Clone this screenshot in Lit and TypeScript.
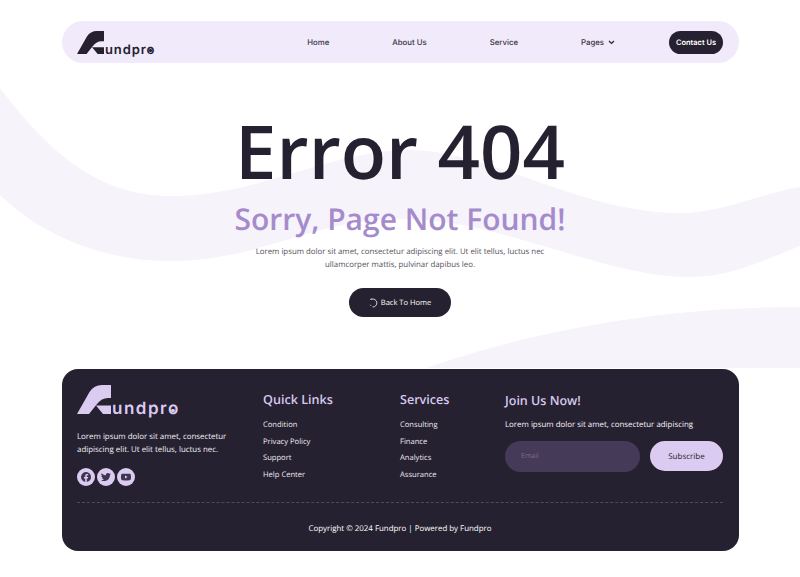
import { LitElement, html, css, svg } from "lit";
import { customElement } from "lit/decorators.js";

const logoMark = svg`<path d="M0 29 L12.5 7 Q17 0 25 0 L34 0 L34 13 L31 13 Q24.5 13 20 19 L12 29 Z"/><path d="M19 20.5 L34 20.5 L34 29 L26 29 Z"/>`;

@customElement("app-root")
export class AppRoot extends LitElement {
  static styles = css`
    :host {
      display: block;
      position: relative;
      height: 577px;
      overflow: hidden;
      background: #fff;
      font-family: "Open Sans", sans-serif;
      color: #262130;
      text-rendering: geometricPrecision;
    }
    .waves { position: absolute; left: 0; top: 0; width: 800px; height: 577px; }
    .waves path { fill: #f6f3fb; }
    .page { position: relative; display: flex; flex-direction: column; padding: 21px 61px 0 62px; }
    header {
      height: 42px;
      background: #f0eafa;
      border-radius: 21px;
      display: flex;
      align-items: center;
      justify-content: space-between;
      padding: 0 16px 0 15px;
    }
    .logo { display: flex; align-items: flex-end; }
    .logo svg { display: block; fill: currentColor; }
    .logo span {
      font-family: Inter, sans-serif;
      font-weight: 600;
      line-height: 1;
      display: block;
    }
    .logo i { font-style: normal; position: relative; }
    .logo i::after {
      content: "";
      position: absolute;
      left: 50%;
      top: 58%;
      width: 0.2em;
      height: 0.2em;
      margin-left: -0.14em;
      margin-top: -0.1em;
      border-radius: 50%;
      background: currentColor;
    }
    .head-logo svg { width: 27px; height: 23px; }
    .head-logo span { font-size: 13px; letter-spacing: 0.9px; margin: 0 0 -3px 1px; }
    nav { display: flex; align-items: center; }
    nav a {
      font-family: Inter, sans-serif;
      font-weight: 500;
      font-size: 7.8px;
      color: #3a3542;
      margin-right: 63px;
      display: flex;
      align-items: center;
      gap: 4px;
    }
    nav a.pages { margin-right: 54px; }
    nav svg { width: 7px; height: 5px; fill: none; stroke: #262130; stroke-width: 1.2; }
    .contact {
      width: 54px; height: 23px; border-radius: 12px;
      background: #262130; color: #fff;
      font-family: Inter, sans-serif; font-weight: 600; font-size: 7.5px;
      display: flex; align-items: center; justify-content: center;
    }
    main { display: flex; flex-direction: column; align-items: center; margin-right: 1px; }
    h1 {
      margin: 44px 0 0;
      font-size: 74.3px;
      line-height: 88px;
      font-weight: 600;
      color: #262130;
    }
    h2 {
      margin: 3px 0 0;
      font-size: 30px;
      line-height: 42px;
      font-weight: 600;
      color: #a58bcb;
    }
    main p {
      margin: 6px 0 0;
      width: 300px;
      text-align: center;
      font-size: 7.85px;
      line-height: 12.5px;
      color: #56525c;
    }
    .back {
      margin-top: 17px;
      width: 102px; height: 29px; border-radius: 15px;
      background: #262130; color: #fff;
      font-size: 7.5px;
      display: flex; align-items: center; justify-content: center; gap: 2px;
    }
    .back svg { width: 10px; height: 10px; fill: none; stroke: #fff; stroke-width: 0.8; }
    footer {
      margin-top: 52px;
      height: 182px;
      box-sizing: border-box;
      background: #262130;
      border-radius: 16px;
      padding: 16px 16px 0 15px;
      color: #fff;
    }
    .cols { display: grid; grid-template-columns: 186px 137px 105px 1fr; height: 117px; }
    .foot-logo { color: #dccbf0; }
    .foot-logo svg { width: 34px; height: 29px; }
    .foot-logo span { font-size: 17px; letter-spacing: 1.5px; margin: 0 0 -4px 1px; }
    .about { margin: 17px 0 0; font-size: 7.9px; line-height: 13px; color: #f2eff6; }
    .social { display: flex; gap: 2px; margin-top: 11px; }
    .social span {
      width: 18px; height: 18px; border-radius: 50%;
      background: #dccbf0;
      display: flex; align-items: center; justify-content: center;
    }
    .social svg { width: 10px; height: 10px; fill: #3f3550; }
    h3 {
      margin: 5px 0 0;
      font-size: 12.6px;
      line-height: 20px;
      font-weight: 600;
      color: #d8c8ee;
    }
    ul { list-style: none; margin: 7px 0 0; padding: 0; }
    li { font-size: 7.6px; line-height: 16.6px; color: #eeeaf3; }
    .join h3 { margin-top: 6px; font-size: 12.5px; }
    .join p { margin: 7px 0 0; font-size: 7.9px; line-height: 14px; color: #f6f3fa; }
    .form { display: flex; gap: 10px; margin-top: 9px; }
    .email {
      width: 135px; height: 31px; box-sizing: border-box;
      border-radius: 16px;
      background: #453a58;
      color: #796c8c;
      font-size: 7px;
      padding-left: 16px;
      display: flex; align-items: center;
    }
    .sub {
      width: 73px; height: 30px; border-radius: 15px;
      background: #dccbf0; color: #262130;
      font-size: 8px; font-weight: 500;
      display: flex; align-items: center; justify-content: center;
    }
    .rule { border-top: 1px dashed #4f4860; }
    .copy { margin-top: 20px; text-align: center; font-size: 7.9px; line-height: 13px; color: #fff; }
  `;

  render() {
    return html`
      <svg class="waves" viewBox="0 0 800 577">
        <path d="M0 88 C40 140 90 196 170 196 C260 196 330 150 410 150 C490 150 580 213 680 213 C720 213 760 194 800 187 L800 246 C760 262 730 277 690 277 C600 277 500 218 400 219 C310 220 260 261 170 261 C90 261 30 225 0 195 Z"/>
        <path d="M427 368 C520 335 650 307 800 307 L800 368 Z"/>
      </svg>
      <div class="page">
        <header>
          <div class="logo head-logo">
            <svg viewBox="0 0 34 29" preserveAspectRatio="none">${logoMark}</svg>
            <span>undpr<i>o</i></span>
          </div>
          <nav>
            <a>Home</a>
            <a>About Us</a>
            <a>Service</a>
            <a class="pages">Pages
              <svg viewBox="0 0 7 5"><path d="M1 1 L3.500 3.500 L6 1"/></svg>
            </a>
            <div class="contact">Contact Us</div>
          </nav>
        </header>
        <main>
          <h1>Error 404</h1>
          <h2>Sorry, Page Not Found!</h2>
          <p>Lorem ipsum dolor sit amet, consectetur adipiscing elit. Ut elit tellus, luctus nec ullamcorper mattis, pulvinar dapibus leo.</p>
          <div class="back">
            <svg viewBox="0 0 10 10"><path d="M2.600 1.200 A4 4 0 1 1 3.600 9"/><path d="M1.200 1.400 L3.200 1 M1.300 6.800 L2 7.800"/></svg>
            <span>Back To Home</span>
          </div>
        </main>
        <footer>
          <div class="cols">
            <div>
              <div class="logo foot-logo">
                <svg viewBox="0 0 34 29">${logoMark}</svg>
                <span>undpr<i>o</i></span>
              </div>
              <p class="about">Lorem ipsum dolor sit amet, consectetur adipiscing elit. Ut elit tellus, luctus nec.</p>
              <div class="social">
                <span><svg viewBox="0 0 24 24"><path d="M24 12a12 12 0 1 0-13.900 11.900v-8.400H7.100V12h3V9.400c0-3 1.800-4.700 4.500-4.700 1.300 0 2.700.2 2.700.2v3h-1.500c-1.500 0-2 .9-2 1.900V12h3.400l-.5 3.500h-2.900v8.400A12 12 0 0 0 24 12z"/></svg></span>
                <span><svg viewBox="0 0 24 24"><path d="M23.900 4.600a9.800 9.800 0 0 1-2.800.8 4.900 4.900 0 0 0 2.100-2.700 9.800 9.800 0 0 1-3.100 1.200 4.900 4.900 0 0 0-8.400 4.500A14 14 0 0 1 1.600 3.200a4.900 4.900 0 0 0 1.500 6.600 4.900 4.900 0 0 1-2.200-.6v.1a4.900 4.900 0 0 0 3.900 4.800 4.900 4.900 0 0 1-2.200.1 4.900 4.900 0 0 0 4.600 3.400A9.900 9.900 0 0 1 0 19.600a14 14 0 0 0 7.500 2.200c9.100 0 14-7.500 14-14v-.6a10 10 0 0 0 2.400-2.600z"/></svg></span>
                <span><svg viewBox="0 0 24 24"><path d="M23.500 6.500a3 3 0 0 0-2.100-2.100C19.500 3.900 12 3.900 12 3.900s-7.500 0-9.400.5A3 3 0 0 0 .5 6.500C0 8.400 0 12 0 12s0 3.600.5 5.500a3 3 0 0 0 2.100 2.100c1.900.5 9.400.5 9.400.5s7.500 0 9.400-.5a3 3 0 0 0 2.100-2.100c.5-1.900.5-5.500.5-5.500s0-3.600-.5-5.500zM9.600 15.600V8.400l6.300 3.600-6.300 3.600z"/></svg></span>
              </div>
            </div>
            <div>
              <h3>Quick Links</h3>
              <ul><li>Condition</li><li>Privacy Policy</li><li>Support</li><li>Help Center</li></ul>
            </div>
            <div>
              <h3>Services</h3>
              <ul><li>Consulting</li><li>Finance</li><li>Analytics</li><li>Assurance</li></ul>
            </div>
            <div class="join">
              <h3>Join Us Now!</h3>
              <p>Lorem ipsum dolor sit amet, consectetur adipiscing</p>
              <div class="form">
                <div class="email">Email</div>
                <div class="sub">Subscribe</div>
              </div>
            </div>
          </div>
          <div class="rule"></div>
          <div class="copy">Copyright © 2024 Fundpro | Powered by Fundpro</div>
        </footer>
      </div>
    `;
  }
}
